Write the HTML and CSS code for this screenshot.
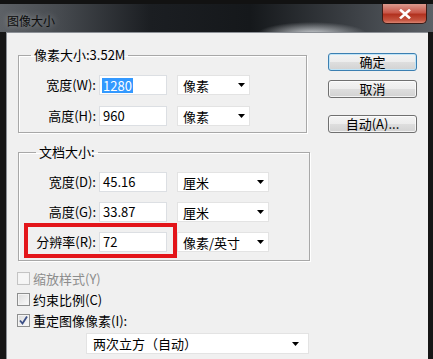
FILE: index.html
```html
<!DOCTYPE html>
<html>
	<head>
		<meta charset="utf-8" />
		<title>图像大小</title>
		<link rel="stylesheet" href="styles.css">
	</head>
	<body>
		<div class="window">
			<div class="titlebar">
				<span class="title">图像大小</span>
				<span class="close-btn">
					<svg width="12" height="10" viewBox="0 0 12 10"><path d="M2 1.5 L10 8.5 M10 1.5 L2 8.5" stroke="#fff" stroke-width="2.6" stroke-linecap="square" fill="none"/></svg>
				</span>
			</div>

			<div class="client">
				<div class="main-col">
					<fieldset class="group group-pixel">
						<legend>像素大小:3.52M</legend>
						<div class="field-grid">
							<label>宽度(W):</label>
							<div class="text-box"><span class="selected">1280</span></div>
							<div class="select-box">像素<svg class="arrow" width="7" height="4" viewBox="0 0 7 4"><path d="M0 0 H7 L3.5 4 Z" fill="#000"/></svg></div>

							<label>高度(H):</label>
							<div class="text-box">960</div>
							<div class="select-box">像素<svg class="arrow" width="7" height="4" viewBox="0 0 7 4"><path d="M0 0 H7 L3.5 4 Z" fill="#000"/></svg></div>
						</div>
					</fieldset>

					<fieldset class="group group-doc">
						<legend>文档大小:</legend>
						<div class="field-grid">
							<label>宽度(D):</label>
							<div class="text-box">45.16</div>
							<div class="select-box">厘米<svg class="arrow" width="7" height="4" viewBox="0 0 7 4"><path d="M0 0 H7 L3.5 4 Z" fill="#000"/></svg></div>

							<label>高度(G):</label>
							<div class="text-box">33.87</div>
							<div class="select-box">厘米<svg class="arrow" width="7" height="4" viewBox="0 0 7 4"><path d="M0 0 H7 L3.5 4 Z" fill="#000"/></svg></div>

							<label class="marked">分辨率(R):</label>
							<div class="text-box">72</div>
							<div class="select-box">像素/英寸<svg class="arrow" width="7" height="4" viewBox="0 0 7 4"><path d="M0 0 H7 L3.5 4 Z" fill="#000"/></svg></div>
						</div>
					</fieldset>

					<div class="check-list">
						<div class="check-row disabled"><span class="check-box"></span>缩放样式(Y)</div>
						<div class="check-row"><span class="check-box"></span>约束比例(C)</div>
						<div class="check-row"><span class="check-box checked"><svg width="11" height="11" viewBox="0 0 11 11"><path d="M2 5.5 L4.5 8.5 L9 1.5" stroke="#3b4f86" stroke-width="1.8" fill="none"/></svg></span>重定图像像素(I):</div>
					</div>

					<div class="select-box resample">两次立方（自动）<svg class="arrow" width="7" height="4" viewBox="0 0 7 4"><path d="M0 0 H7 L3.5 4 Z" fill="#000"/></svg></div>
				</div>

				<div class="button-col">
					<div class="btn btn-default">确定</div>
					<div class="btn">取消</div>
					<div class="btn btn-auto">自动(A)...</div>
				</div>
			</div>
		</div>
	</body>
</html>
```

FILE: styles.css
```css
html, body {
	margin: 0;
	padding: 0;
}
body {
	width: 433px;
	height: 359px;
	overflow: hidden;
	background: #161616;
	font-family: "Noto Sans CJK SC", sans-serif;
	font-size: 13px;
	color: #000;
}
.window {
	height: 359px;
	display: flex;
	flex-direction: column;
}
.titlebar {
	height: 32px;
	flex: none;
	display: flex;
	justify-content: space-between;
	align-items: flex-start;
	padding-left: 7px;
	box-sizing: border-box;
	border-top: 4px solid #121212;
	background:
		radial-gradient(ellipse 55px 12px at 312px 30px, rgba(215,219,223,0.95), rgba(215,219,223,0) 100%),
		linear-gradient(90deg, #5d6166 0, #464a4f 60px, #1b1e22 150px, #15181b 250px, #3b3f44 350px, #5b6066 433px);
}
.title {
	font-size: 12px;
	line-height: 16px;
	margin-top: 9px;
	color: #0c0c0c;
	text-shadow: 0 0 6px rgba(255,255,255,0.5);
}
.close-btn {
	width: 45px;
	height: 20px;
	margin-right: 6px;
	box-sizing: border-box;
	border: 1px solid #3b1b16;
	border-top: none;
	border-radius: 0 0 5px 5px;
	background: linear-gradient(#dc9a8e 0, #c9584a 45%, #b2321f 55%, #c4533f 85%, #d98370 100%);
	display: flex;
	align-items: center;
	justify-content: center;
}
.client {
	flex: 1;
	margin: 0 5px 0 6px;
	border-top: 1px solid #8c9096;
	border-left: 1px solid #8c9096;
	background: #f0f0f0;
	display: flex;
	align-items: flex-start;
}
.main-col {
	padding: 15px 0 0 11px;
	display: flex;
	flex-direction: column;
}
.group {
	margin: 0;
	padding: 13px 0 6px 0;
	border: 1px solid #a8a8a8;
	box-shadow: 1px 1px 0 #fff, inset 1px 1px 0 #fff;
	min-width: 0;
	box-sizing: border-box;
}
.group legend {
	padding: 0 3px;
	line-height: 14px;
}
.group-pixel {
	width: 289px;
}
.group-pixel legend {
	margin-left: 12px;
}
.group-doc {
	width: 292px;
	margin-top: 12px;
	padding-bottom: 8px;
}
.group-doc legend {
	margin-left: 17px;
}
.field-grid {
	display: grid;
	grid-template-columns: 80px 68px 83px;
	grid-auto-rows: 20px;
	row-gap: 11px;
}
.group-doc .field-grid {
	grid-template-columns: 80px 68px 102px;
	row-gap: 10px;
}
.field-grid label {
	text-align: right;
	padding-right: 3px;
	line-height: 20px;
	white-space: nowrap;
}
.text-box {
	background: #fff;
	border: 1px solid #dcdfe3;
	padding-left: 3px;
	line-height: 18px;
	box-sizing: border-box;
	display: flex;
	align-items: center;
}
.selected {
	background: #3399ff;
	color: #fff;
	line-height: 15px;
	padding: 0 1px;
	margin-left: -1px;
}
.select-box {
	background: #fff;
	border: 1px solid #e3e3e3;
	box-sizing: border-box;
	display: flex;
	align-items: center;
	justify-content: space-between;
	padding: 0 4px 0 5px;
	white-space: nowrap;
}
.field-grid .select-box {
	margin-left: 10px;
}
.marked {
	position: relative;
}
.marked::after {
	content: "";
	position: absolute;
	left: 5px;
	right: -78px;
	top: -9px;
	bottom: -6px;
	border: 4px solid #e3151a;
}
.check-list {
	margin-top: 7px;
	margin-left: -1px;
	display: flex;
	flex-direction: column;
}
.check-row {
	height: 21px;
	display: flex;
	align-items: center;
	gap: 3px;
	white-space: nowrap;
}
.check-row.disabled {
	color: #8d8d8d;
}
.check-box {
	width: 13px;
	height: 13px;
	box-sizing: border-box;
	border: 1px solid #8e8f8f;
	background: linear-gradient(135deg, #dcdcdc, #fbfbfb);
	box-shadow: inset 0 0 0 1px #f4f4f4;
	display: flex;
	align-items: center;
	justify-content: center;
}
.disabled .check-box {
	border-color: #c4c4c4;
	background: #f6f6f6;
}
.resample {
	width: 223px;
	height: 21px;
	margin: 2px 0 0 68px;
	padding: 0 9px 0 6px;
}
.button-col {
	margin-left: 18px;
	padding-top: 20px;
	display: flex;
	flex-direction: column;
	gap: 9px;
}
.btn {
	width: 89px;
	height: 18px;
	box-sizing: border-box;
	border: 1px solid #707070;
	border-radius: 3px;
	background: linear-gradient(#f4f4f4 0, #ececec 50%, #dedede 50%, #d2d2d2 100%);
	box-shadow: inset 0 0 0 1px rgba(255,255,255,0.7);
	text-align: center;
	line-height: 16px;
}
.btn-default {
	border-color: #3c7fb1;
	box-shadow: inset 0 0 0 1px #bfe4f7;
}
.btn-auto {
	margin-top: 8px;
}
```
